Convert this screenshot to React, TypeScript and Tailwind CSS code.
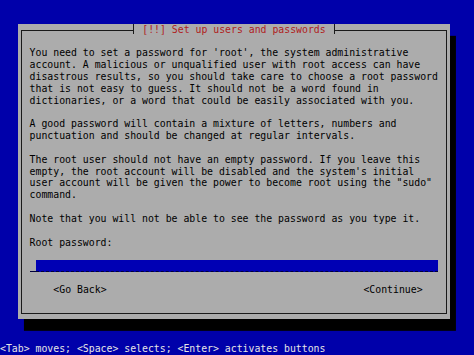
import { FC } from "react";

const paragraphs: string[][] = [
	[
		"You need to set a password for 'root', the system administrative",
		"account. A malicious or unqualified user with root access can have",
		"disastrous results, so you should take care to choose a root password",
		"that is not easy to guess. It should not be a word found in",
		"dictionaries, or a word that could be easily associated with you.",
	],
	[
		"A good password will contain a mixture of letters, numbers and",
		"punctuation and should be changed at regular intervals.",
	],
	[
		"The root user should not have an empty password. If you leave this",
		"empty, the root account will be disabled and the system's initial",
		'user account will be given the power to become root using the "sudo"',
		"command.",
	],
	["Note that you will not be able to see the password as you type it."],
	["Root password:"],
];

// one text cell of the 80x30 console = 5.925 x 11.833 px
const Row: FC<{ text?: string }> = ({ text }) => (
	<div className="h-[11.833px] whitespace-pre">{text ?? " "}</div>
);

const App: FC = () => {
	return (
		<div className="w-[474px] h-[355px] bg-[#0000aa] flex flex-col overflow-hidden font-['DejaVu_Sans_Mono',monospace] text-[9.84px] leading-[11.833px]">
			<div className="pt-[23.667px] pl-[17.775px]">
				<div className="relative w-[432.5px] h-[295.8px] bg-[#acacac] px-[2.96px] py-[5.92px] shadow-[5.925px_11.833px_0_0_#000] text-black">
					<div className="h-full border border-[#1a1a1a] pl-[7.9px] pt-[16.75px]">
						{paragraphs.map((lines, i) => (
							<div key={i}>
								{lines.map((l) => (
									<Row key={l} text={l} />
								))}
								<Row />
							</div>
						))}
						<div className="flex h-[11.833px]">
							<div className="w-[5.925px] border-b border-dashed border-[#00003a]" />
							<div className="w-[402.9px] bg-[#0000b4] border-b border-dashed border-[#00003a]" />
						</div>
						<Row />
						<div className="flex justify-between px-[23.7px] h-[11.833px]">
							<span>&lt;Go Back&gt;</span>
							<span>&lt;Continue&gt;</span>
						</div>
					</div>
					<div className="absolute top-0 left-[115.5px] w-[201.45px] h-[10px] bg-[#acacac] border-x border-[#1a1a1a] flex justify-center text-[#b01c1c] whitespace-pre">
						<span className="leading-[11.833px]">[!!] Set up users and passwords</span>
					</div>
				</div>
			</div>
			<div className="mt-auto h-[11.833px] text-[#e6e6e6] whitespace-pre">
				&lt;Tab&gt; moves; &lt;Space&gt; selects; &lt;Enter&gt; activates buttons
			</div>
		</div>
	);
};

export default App;
